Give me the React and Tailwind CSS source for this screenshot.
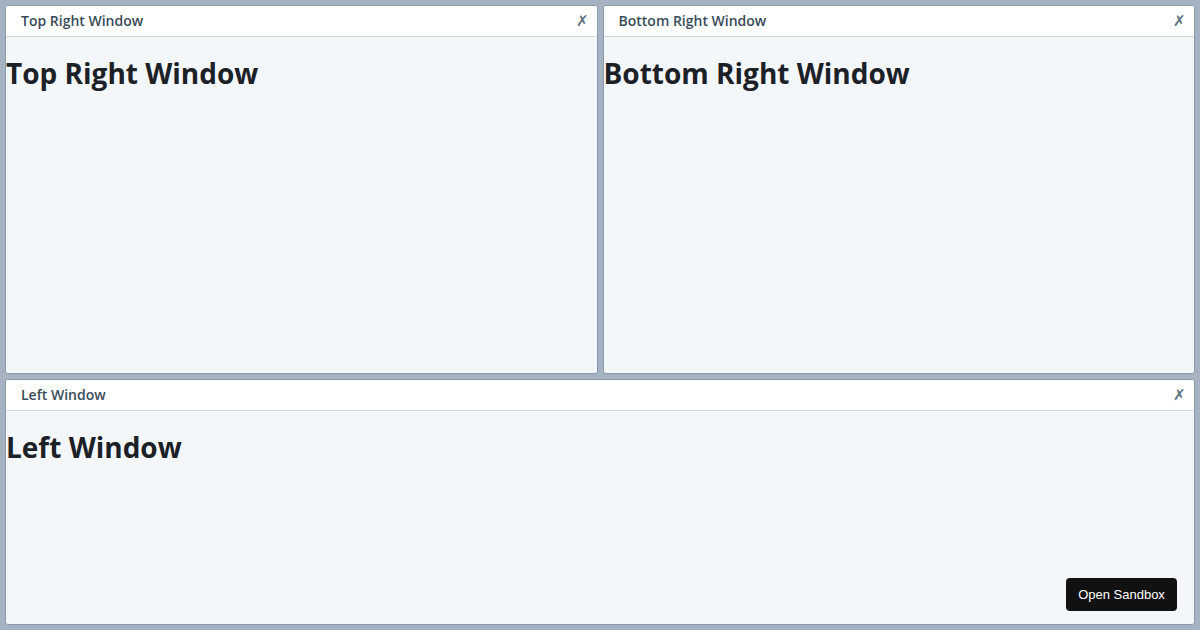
function MosaicWindow({ title, className = '' }) {
    return (
        <div className={`flex min-h-0 min-w-0 flex-col overflow-hidden rounded-[3px] border border-[#8a9aab] bg-[#f4f7fa] ${className}`}>
            <div className="flex h-[31px] shrink-0 items-center justify-between border-b border-[#d3d9df] bg-white pb-[2px] pl-[15px] pr-[8px]">
                <span className="text-[14px] font-semibold text-[#394b59]">{title}</span>
                <span className="text-[15px] text-[#5c7080]">✗</span>
            </div>
            <div className="flex-1">
                <h1 className="mt-[17px] text-[28px] leading-[38px] font-bold text-[#1c2127]">{title}</h1>
            </div>
        </div>
    );
}

export default function App() {
    return (
        <div className="relative flex h-[630px] w-[1200px] flex-col gap-[5px] bg-[#a4b2c1] p-[5px] font-['Open_Sans',sans-serif]">
            <div className="flex min-h-0 flex-[3] gap-[5px]">
                <MosaicWindow title="Top Right Window" className="flex-1" />
                <MosaicWindow title="Bottom Right Window" className="flex-1" />
            </div>
            <div className="flex min-h-0 flex-[2]">
                <MosaicWindow title="Left Window" className="flex-1" />
            </div>
            <button className="absolute right-[23px] bottom-[19px] h-[33px] w-[111px] rounded-[4px] bg-[#111111] font-['Liberation_Sans',sans-serif] text-[13px] text-white">
                Open Sandbox
            </button>
        </div>
    );
}
